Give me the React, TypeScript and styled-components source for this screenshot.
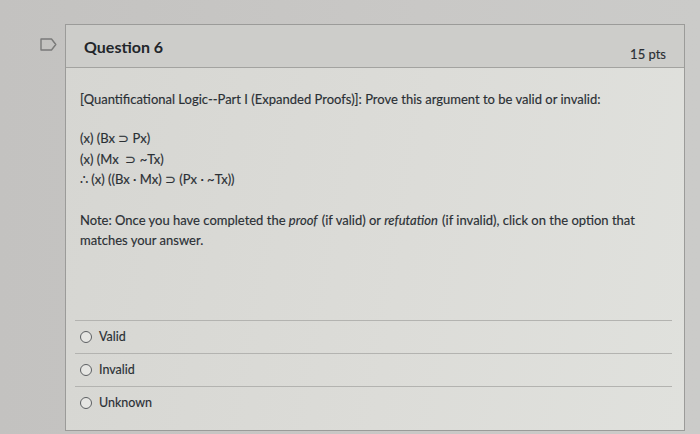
import React from 'react';
import styled, { createGlobalStyle } from 'styled-components';

const GlobalStyle = createGlobalStyle`
	html, body {
		margin: 0;
		padding: 0;
	}
	body {
		width: 700px;
		height: 434px;
		overflow: hidden;
		background: linear-gradient(90deg, #c3c2c0 0%, #c9c8c6 60%, #cbcbc9 100%);
		font-family: Lato, 'Open Sans', sans-serif;
		color: #2a2f34;
	}
`;

const Page = styled.div`
	display: flex;
	align-items: flex-start;
	padding: 24px 15px 0 40px;
	height: 434px;
	box-sizing: border-box;
`;

const FlagCol = styled.div`
	width: 25px;
	padding-top: 11px;
	flex-shrink: 0;
`;

const Card = styled.div`
	flex: 1;
	height: 407px;
	border: 1px solid #9b9b99;
	box-sizing: border-box;
	background: linear-gradient(100deg, #d6d6d2 0%, #dcdcd8 55%, #e0e1dd 100%);
	display: flex;
	flex-direction: column;
`;

const Header = styled.div`
	height: 42px;
	display: flex;
	align-items: center;
	justify-content: space-between;
	padding: 0 18px;
	background: #cdcdca;
	border-bottom: 1px solid #a3a3a0;
`;

const Title = styled.h2`
	margin: 0;
	font-size: 16px;
	font-weight: 700;
	color: #22262a;
`;

const Points = styled.span`
	font-size: 13px;
	-webkit-text-stroke: 0.15px #2a2f34;
	position: relative;
	top: 8px;
`;

const Body = styled.div`
	padding: 21px 12px 0 14px;
	display: flex;
	flex-direction: column;
	font-size: 13px;
	-webkit-text-stroke: 0.15px #2a2f34;
`;

const Text = styled.p`
	margin: 0;
	line-height: 20px;
`;

const Em = styled.i`
	padding-right: 1px;
`;

const Premises = styled.div`
	margin: 19px 0 20px;
	line-height: 20.5px;
`;

const Line = styled.div``;

const Answers = styled.div`
	margin: 70px 0 0 -5px;
	display: flex;
	flex-direction: column;
`;

const Answer = styled.label`
	height: 32px;
	display: flex;
	align-items: center;
	gap: 7px;
	padding-left: 5px;
	border-top: 1px solid #b3b3b0;
	font-size: 12.5px;
`;

const Radio = styled.span`
	width: 10px;
	height: 10px;
	border-radius: 50%;
	border: 1.5px solid #5c5f62;
	background: #e6e6e3;
`;

const Flag = () => (
	<svg width="17" height="13" viewBox="0 0 17 13">
		<path d="M1 1 H11.5 L15.8 6.5 L11.5 12 H1 Z" fill="none" stroke="#7a7a79" strokeWidth="1.4" strokeLinejoin="round" />
	</svg>
);

const answers = ['Valid', 'Invalid', 'Unknown'];

const App = (): JSX.Element => {
	return (
		<>
			<GlobalStyle />
			<Page>
				<FlagCol>
					<Flag />
				</FlagCol>
				<Card>
					<Header>
						<Title>Question 6</Title>
						<Points>15 pts</Points>
					</Header>
					<Body>
						<Text>
							[Quantificational Logic--Part I (Expanded Proofs)]: Prove this argument to be valid or invalid:
						</Text>
						<Premises>
							<Line>(x) (Bx ⊃ Px)</Line>
							<Line>(x) (Mx &nbsp;⊃ ~Tx)</Line>
							<Line>∴ (x) ((Bx · Mx) ⊃ (Px · ~Tx))</Line>
						</Premises>
						<Text>
							Note: Once you have completed the <Em>proof</Em> (if valid) or <Em>refutation</Em> (if invalid), click on the option that
							matches your answer.
						</Text>
						<Answers>
							{answers.map((a) => (
								<Answer key={a}>
									<Radio />
									{a}
								</Answer>
							))}
						</Answers>
					</Body>
				</Card>
			</Page>
		</>
	);
};

export default App;
